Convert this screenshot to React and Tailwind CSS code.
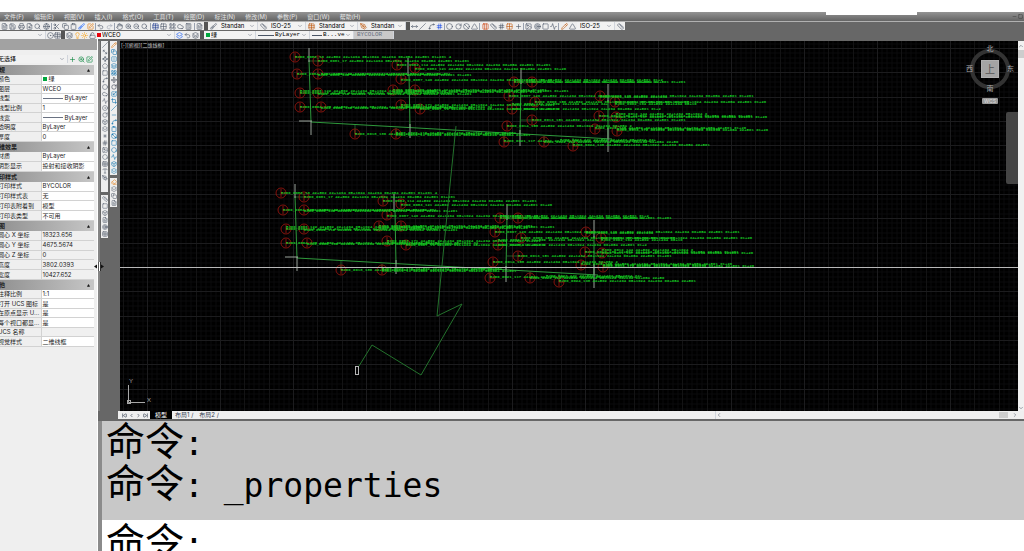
import React, { useState } from 'react';
import {
  ChevronDown, ChevronUp, ChevronLeft, ChevronRight, SkipBack, SkipForward, Save, Printer, FileSearch, Search, Globe,
  Scissors, Copy, Clipboard, Brush, SquarePen, Undo2, Redo2, Hand, ZoomIn, ZoomOut, Move, Table, Grid2x2, LayoutGrid,
  Calculator, Layers, Layers2, Lightbulb, Sun, LockOpen, FileText, Slash, Spline, Circle, Pentagon, Square, Hexagon,
  Type, Eraser, FlipHorizontal, RotateCw, Scaling, Minus, Crop, Image, Pencil, Ruler, MoveHorizontal, MoveDiagonal2,
  Target, Triangle, Activity, Columns3, Ban, Diameter, Asterisk, Cloud, Box, Waypoints, PenTool, CircleDot, Plus, Hash,
} from 'lucide-react';

const menus = ['文件(F)', '编辑(E)', '视图(V)', '插入(I)', '格式(O)', '工具(T)', '绘图(D)', '标注(N)', '修改(M)', '参数(P)', '窗口(W)', '帮助(H)'];

const fileTools = [
  [FileText, '新建'], [Save, '保存'], [Printer, '打印'], [FileSearch, '预览'], [Search, '发布'], [Globe, '三维打印'], null,
  [Scissors, '剪切'], [Copy, '复制'], [Clipboard, '粘贴'], [Brush, '特性匹配', 'text-blue-600'], [SquarePen, '块编辑', 'text-amber-600'], null,
  [Undo2, '放弃'], [Redo2, '重做', 'text-gray-400'], null,
  [Hand, '平移'], [ZoomIn, '实时缩放'], [ZoomOut, '窗口缩放'], [Search, '上一个'], null,
  [Table, '特性', 'text-blue-900'], [Grid2x2, '设计中心'], [LayoutGrid, '工具选项板'], [Cloud, '图纸集'], [Calculator, '计算器'], null,
  [FileText, '帮助'],
];

const dimTools = [
  [MoveHorizontal, '线性'], [Slash, '对齐'], [Spline, '弧长'], [Hash, '坐标', 'text-blue-700'], null,
  [Circle, '半径'], [RotateCw, '折弯'], [Ban, '直径'], [Triangle, '角度'], null,
  [Columns3, '快速标注', 'text-orange-700'], [Ruler, '基线'], [Hash, '连续'], [Grid2x2, '等距标注', 'text-amber-700'], [Plus, '打断标注'], null,
  [Image, '公差'], [Target, '圆心标记'], [Square, '检验'], [Activity, '折弯线性'], null,
  [Pencil, '编辑标注', 'text-amber-700'], [Triangle, '编辑文字'],
];

const drawTools = [
  [Slash, '直线'], [MoveDiagonal2, '构造线'], [Waypoints, '多段线'], [Pentagon, '多边形'], [Square, '矩形'], [Spline, '圆弧'],
  [Circle, '圆'], [Cloud, '修订云线'], [Activity, '样条曲线'], [CircleDot, '椭圆'], [RotateCw, '椭圆弧'], [Box, '插入块'], [Layers2, '创建块'],
  [Asterisk, '点'], [Hash, '图案填充'], [Image, '渐变色'], [Hexagon, '面域'], [Table, '表格'], [Type, '多行文字'], [PenTool, '添加选定'],
];
const inquiryTools = [[Ruler, '距离'], [Square, '面积'], [Box, '体积'], [FileText, '列表'], [Target, '定位点'], [Table, '查询']];

const modifyTools = [
  [Pencil, '删除', 'text-amber-600'], [Copy, '复制对象'], [FlipHorizontal, '镜像'], [Layers, '偏移'], [LayoutGrid, '阵列'], [Move, '移动', 'text-gray-800'],
  [RotateCw, '旋转', 'text-gray-800'], [Scaling, '缩放'], [Crop, '拉伸'], [Slash, '修剪'], [Minus, '延伸'], [Spline, '打断于点'],
  [Clipboard, '打断'], [Diameter, '合并'], [Square, '倒角'], [Hexagon, '圆角'], [Activity, '光顺曲线'], [Box, '分解'], [Layers2, '编辑块'],
];
const orderTools = [[Eraser, '前置', 'text-amber-600'], [Layers2, '后置'], [Copy, '置于对象之上'], [FileText, '置于对象之下']];

const groups = [
  {
    title: '常规', size: 'h-[67px]',
    rows: [['颜色', '绿', 'swatch'], ['图层', 'WCEO'], ['线型', 'ByLayer', 'line'], ['线型比例', '1'], ['线宽', 'ByLayer', 'line'], ['透明度', 'ByLayer'], ['厚度', '0']],
  },
  { title: '三维效果', size: 'h-[20px]', rows: [['材质', 'ByLayer'], ['阴影显示', '投射和接收阴影']] },
  { title: '打印样式', size: 'h-[39px]', rows: [['打印样式', 'BYCOLOR'], ['打印样式表', '无'], ['打印表附着到', '模型'], ['打印表类型', '不可用']] },
  {
    title: '视图', size: 'h-[49px]', muted: true,
    rows: [['圆心 X 坐标', '18323.656'], ['圆心 Y 坐标', '4675.5674'], ['圆心 Z 坐标', '0'], ['高度', '3802.0393'], ['宽度', '10427.652']],
  },
  {
    title: '其他', size: 'h-[57px]',
    rows: [['注释比例', '1:1'], ['打开 UCS 图标', '是'], ['在原点显示 U...', '是'], ['每个视口都显...', '是'], ['UCS 名称', ''], ['视觉样式', '二维线框']],
  },
];

// Survey points: marker centre x, y
const points = [
  [295, 57], [318, 61], [297, 74], [318, 74], [300, 93], [318, 93], [300, 107], [321, 107],
  [397, 65], [415, 68], [401, 79], [393, 90], [415, 90], [401, 105], [420, 109], [355, 134], [396, 134],
  [514, 82], [532, 82], [509, 96], [535, 102], [512, 109], [532, 120], [507, 126], [504, 142], [544, 142], [573, 146],
  [600, 96], [615, 102], [599, 116], [616, 117], [595, 129], [617, 131],
];

// Annotations: x, baseline y, character count
const notes = [
  [295, 58, 65], [318, 62, 64], [397, 66, 64], [415, 70, 63],
  [297, 75, 65], [318, 76, 64], [321, 75, 52], [401, 81, 63],
  [514, 81, 62], [532, 83, 64], [514, 83, 60], [393, 91, 65], [415, 92, 64], [393, 93, 62],
  [300, 94, 64], [318, 95, 64], [300, 92, 58], [509, 97, 44], [600, 97, 64], [600, 98, 28],
  [535, 103, 64], [615, 103, 63], [615, 105, 34], [401, 106, 64], [300, 108, 65], [321, 109, 64], [401, 108, 38],
  [420, 110, 58], [512, 110, 62], [512, 105, 40], [599, 117, 64], [616, 118, 63], [616, 115, 38], [532, 121, 64],
  [507, 127, 52], [595, 129, 63], [617, 131, 63], [617, 130, 44],
  [355, 135, 64], [396, 136, 57], [396, 134, 50], [504, 142, 61], [544, 143, 56], [560, 141, 40], [573, 146, 58],
];

const NOTE_TAIL = ' 42+502 22+1494 05+1024 34+294 00+054 22+501 01+261 40+0228 50 11+504 60';

const noteText = (i, length) => `RJ00_00${String(80 + i).slice(-2)}_1${(i * 7) % 90}${NOTE_TAIL}`.slice(0, length);

const Tools = ({ items, vertical, tint = 'text-gray-600' }) => {
  const across = items.length === 1 ? 'h-[8px] w-[10px] shrink-0 justify-center' : 'h-[8px] flex-auto justify-between px-[1px]';
  return (
    <div className={`flex items-center bg-[#eeeeee] ${vertical ? 'w-[7px] flex-col gap-[1px] py-[1px]' : across}`}>
      {items.map((item, i) => {
        if (!item) return <span key={i} className="h-[7px] w-px bg-gray-400" />;
        const [Icon, label, color] = item;
        return (
          <button key={i} type="button" aria-label={label} className={`shrink-0 ${color || tint}`}>
            <Icon size={vertical ? 6 : 7} strokeWidth={2} className="block" />
          </button>
        );
      })}
    </div>
  );
};

const Picker = ({ label, value, width, lead, mono, disabled, indent = 'pl-[3px]' }) => (
  <label className={`flex h-[8px] shrink-0 items-center overflow-hidden border-r border-gray-300 ${width} ${disabled ? 'bg-[#c9c9c9] text-gray-500' : 'bg-[#f2f2f2] text-black'}`}>
    {lead}
    <select
      aria-label={label}
      disabled={disabled}
      className={`h-[8px] min-w-0 flex-1 appearance-none bg-transparent text-[6px] leading-[8px] outline-none ${indent} ${mono ? 'font-["Liberation_Mono",monospace]' : ''}`}
    >
      <option>{value}</option>
    </select>
    {!disabled && <ChevronDown size={6} className="mr-[2px] shrink-0 text-gray-500" />}
  </label>
);

const Grip = () => <span className="h-[8px] w-[4px] shrink-0 bg-[#555555]" />;

const PropertyGroup = ({ group }) => {
  const [open, setOpen] = useState(true);
  return (
    <section>
      <button
        type="button"
        onClick={() => setOpen(!open)}
        className="flex h-[10px] w-full items-center justify-between bg-linear-to-r from-[#919191] to-[#c6c6c6] pr-[4px] text-[6px] leading-[10px] font-bold"
      >
        <span className="-ml-[5px]">{group.title}</span>
        <Triangle size={3} fill="currentColor" />
      </button>
      {open && (
        <table className={`w-full table-fixed border-collapse text-[6px] leading-[8px] ${group.size}`}>
          <tbody>
            {group.rows.map(([name, value, mark]) => (
              <tr key={name} className="border-b border-[#d2d2d2]">
                <th scope="row" className="w-[43px] overflow-hidden border-r border-[#d2d2d2] p-0 text-left font-normal whitespace-nowrap">{name}</th>
                <td className={`overflow-hidden p-0 pl-[1px] whitespace-nowrap ${group.muted || !value ? 'bg-[#f0f0f0]' : 'bg-white'}`}>
                  {mark === 'swatch' && <span className="mr-[2px] inline-block size-[4px] bg-green-600" />}
                  {mark === 'line' && <span className="mr-[2px] inline-block h-px w-[20px] bg-gray-500 align-middle" />}
                  {value}
                </td>
              </tr>
            ))}
          </tbody>
        </table>
      )}
    </section>
  );
};

const Survey = () => (
  <g>
    <g stroke="#2f9a3c" strokeWidth="1" fill="none">
      <path d="M309 60L311 122M409 74L410 128M521 80L520 134M608 100V138M311 122L612 139" />
      <path d="M355 125V134M396 128V134M504 134V142M544 136V142M573 138V146M309 61H318M409 90H415M521 82H532M521 120H532M608 117H616" strokeWidth="0.6" />
    </g>
    <g stroke="#9aa39a" strokeWidth="1" fill="none">
      <path d="M309 48V62M311 121V135M408 58V76M410 124V138M521 68V84M520 130V146M608 84V102M608 128V152M299 121H312" />
    </g>
    <g stroke="#a5160f" strokeWidth="0.8" fill="none">
      {points.map(([x, y]) => (
        <path key={`${x}-${y}`} d={`M${x - 5} ${y}a5 5 0 1 0 10 0a5 5 0 1 0 -10 0M${x} ${y - 4}v8M${x} ${y}h5`} />
      ))}
    </g>
    <g fill="#14c420" fontSize="4" fontWeight="bold" fontFamily="Liberation Mono, monospace">
      {notes.map(([x, y, length], i) => (
        <text key={i} x={x} y={y}>{noteText(i, length)}</text>
      ))}
    </g>
  </g>
);

const Drawing = () => (
  <svg viewBox="120 41 898 370" preserveAspectRatio="xMinYMin slice" className="block h-full w-full">
    <defs>
      <pattern id="grid" x="147" y="48" width="73" height="73" patternUnits="userSpaceOnUse">
        <path d="M5 0V73M10 0V73M15 0V73M20 0V73M29 0V73M34 0V73M39 0V73M44 0V73M54 0V73M59 0V73M64 0V73M69 0V73" stroke="#0a0a0b" />
        <path d="M0 5H73M0 10H73M0 15H73M0 20H73M0 29H73M0 34H73M0 39H73M0 44H73M0 54H73M0 59H73M0 64H73M0 69H73" stroke="#0a0a0b" />
        <path d="M24.5 0V73M49.5 0V73" stroke="#131314" />
        <path d="M0.5 0V73M0 0.5H73M0 24.5H73M0 49.5H73" stroke="#1c1c1e" />
      </pattern>
    </defs>
    <rect x="120" y="41" width="898" height="370" fill="url(#grid)" />
    <Survey />
    <g transform="translate(-14 136)"><Survey /></g>
    <path d="M456 126L451 175L437 316L462 304L421 375L372 345L359 366" fill="none" stroke="#23722c" strokeWidth="1" />
    <rect x="355.5" y="366.5" width="3" height="8" fill="none" stroke="#b5b5b5" />
    <path d="M120 267.5H1018" stroke="#b8b8b8" />
    <g stroke="#a8a8a8" fill="none">
      <path d="M128.5 385V402.5H145" />
      <rect x="127.5" y="400.5" width="3" height="3" />
    </g>
    <g fill="#a8a8a8" fontSize="6" fontFamily="Liberation Sans, sans-serif">
      <text x="129" y="383">Y</text>
      <text x="147" y="402">X</text>
    </g>
  </svg>
);

const ViewCube = () => (
  <div className="absolute top-[4px] right-[4px] flex w-[48px] flex-col items-center text-[7px] leading-[8px] text-[#aaaaaa]">
    <div className="relative flex h-[48px] w-full items-center justify-between">
      <span className="absolute inset-x-[4px] top-[4px] h-[40px] rounded-full border-4 border-[#333333]" />
      <span className="absolute inset-x-0 top-0 text-center">北</span>
      <span className="relative">西</span>
      <button type="button" className="relative size-[18px] border border-[#b0b0b0] bg-[#a4a4a4] text-[10px] leading-[16px] text-[#555555]">上</button>
      <span className="relative">东</span>
      <span className="absolute inset-x-0 bottom-0 text-center">南</span>
    </div>
    <button type="button" className="mt-[5px] h-[6px] w-[16px] rounded-[1px] bg-[#999999] text-[5px] leading-[6px] text-[#dddddd]">WCS</button>
  </div>
);

const App = () => {
  const [command, setCommand] = useState('');
  const [tab, setTab] = useState('模型');

  return (
    <div className='flex h-screen w-full flex-col overflow-hidden bg-[#676767] font-["Inter","Noto_Sans_CJK_SC",sans-serif] text-[6px] text-[#1c1c1c]'>
      <div className="h-3 shrink-0 bg-white" />

      {/* Menu bar */}
      <header className="flex h-[10px] shrink-0 items-start justify-between border-b border-[#b0b0b0] bg-linear-to-b from-[#939393] to-[#646464]">
        <nav className="flex gap-[10px] pl-[4px]">
          {menus.map((menu) => (
            <button key={menu} type="button" className="leading-[9px] whitespace-nowrap text-[#e4e4e4]">{menu}</button>
          ))}
        </nav>
        <div className="flex w-[205px] items-start justify-between">
          <span className="ml-[7px] h-[3px] w-[91px] bg-white" />
          <span className="flex gap-[1px] pt-[2px] pr-[1px] text-[#303030]">
            <Minus size={5} />
            <Square size={5} />
          </span>
        </div>
      </header>

      {/* Standard, styles and dimension toolbars */}
      <div className="flex h-[8px] shrink-0">
        <div className="flex w-[204px] shrink-0 overflow-hidden"><Tools items={fileTools} /></div>
        <Grip />
        <div className="flex shrink-0">
          <Tools items={[[Brush, '文字样式']]} />
          <Picker label="文字样式" value="Standan" width="w-[40px]" />
          <Tools items={[[Ruler, '标注样式']]} />
          <Picker label="标注样式" value="ISO-25" width="w-[38px]" />
          <Tools items={[[Table, '表格样式', 'text-amber-700']]} />
          <Picker label="表格样式" value="Standard" width="w-[42px]" />
          <Tools items={[[PenTool, '多重引线样式', 'text-amber-700']]} />
          <Picker label="多重引线样式" value="Standan" width="w-[38px]" />
        </div>
        <Grip />
        <div className="flex w-[215px] shrink-0">
          <Tools items={dimTools} />
          <Picker label="当前标注样式" value="ISO-25" width="w-[38px]" />
          <Tools items={[[Ruler, '样式管理']]} />
        </div>
      </div>

      {/* Workspace, layer and property toolbars */}
      <div className="mt-[1px] flex h-[8px] shrink-0">
        <Picker label="工作空间" value="" width="w-[46px]" />
        <div className="flex w-[15px] shrink-0"><Tools items={[[CircleDot, '工作空间设置'], [Table, '我的工作空间']]} /></div>
        <Grip />
        <div className="flex w-[32px] shrink-0">
          <Tools items={[[Layers, '图层特性'], [Lightbulb, '开关', 'text-amber-500'], [Sun, '冻结', 'text-amber-500'], [LockOpen, '锁定']]} />
        </div>
        <Picker label="图层" value="WCEO" width="w-[78px]" indent="pl-[1px]" lead={<span className="size-[4px] bg-red-600" />} />
        <div className="flex w-[25px] shrink-0">
          <Tools items={[[Layers2, '置为当前', 'text-blue-600'], [Undo2, '上一个图层'], [Layers, '图层状态']]} />
        </div>
        <Grip />
        <Picker label="颜色" value="绿" width="w-[52px]" indent="pl-[1px]" lead={<span className="ml-[2px] size-[4px] bg-green-600" />} />
        <Picker label="线型" value="ByLayer" width="w-[54px]" indent="pl-[1px]" mono lead={<span className="ml-[2px] h-px w-[16px] bg-gray-600" />} />
        <Picker label="线宽" value="B...ve" width="w-[44px]" indent="pl-[1px]" mono lead={<span className="ml-[2px] h-px w-[10px] bg-gray-600" />} />
        <Picker label="打印样式" value="BYCOLOR" width="w-[40px]" mono disabled />
      </div>

      <div className="flex min-h-0 flex-1">
        {/* Properties palette */}
        <aside className="w-[98px] shrink-0 overflow-hidden border-r border-white bg-[#efefef]">
          <div className="h-[11px] bg-[#a2a2a2]" />
          <div className="-ml-[2px] pr-[3px]">
            <div className="flex h-[15px] items-center pt-[3px]">
              <Picker label="选择" value="无选择" width="w-[70px]" indent="pl-0" />
              <Tools items={[[Plus, '切换选择', 'text-green-700'], [ZoomIn, '选择对象', 'text-green-700'], [SquarePen, '快速选择', 'text-green-700']]} />
            </div>
            {groups.map((group) => <PropertyGroup key={group.title} group={group} />)}
          </div>
        </aside>

        <div className="flex min-w-0 flex-1 flex-col">
          <div className="flex min-h-0 flex-1 pt-[2px]">
            <div className="relative flex w-[22px] shrink-0 items-start gap-[2px] border-l-2 border-[#858585] pl-[1px]">
              <div className="flex flex-col gap-[3px]">
                <div className="h-[151px] overflow-hidden bg-[#eeeeee]"><Tools items={drawTools} vertical /></div>
                <Tools items={inquiryTools} vertical />
              </div>
              <div className="flex flex-col gap-[3px]">
                <Tools items={modifyTools} vertical tint="text-sky-700" />
                <Tools items={orderTools} vertical />
              </div>
              {/* Resize cursor over the palette edge */}
              <svg viewBox="0 0 10 9" className="absolute top-[221px] -left-[6px] h-[9px] w-[10px]" aria-hidden="true">
                <path d="M4 0h2v9h-2z" fill="#fff" />
                <path d="M0 4.5L3 2.5V6.5zM10 4.5L7 2.5V6.5zM4 0h.7v9H4zM6 0h.7v9H6z" fill="#111" />
              </svg>
            </div>

            <main className="relative min-w-0 flex-1 bg-black">
              <Drawing />
              <p className="absolute top-[1px] left-[1px] text-[5px] leading-[7px] text-[#c9c9c9]">[-][俯视][二维线框]</p>
              <ViewCube />
              <div className="absolute top-[71px] right-0 h-[72px] w-[12px] rounded-l-[2px] bg-[#444444]" />
            </main>

            <div className="flex w-[6px] shrink-0 flex-col items-center justify-between bg-[#f1f1f1] text-gray-600">
              <div className="flex w-full flex-col items-center pt-[2px]">
                <ChevronUp size={6} />
                <span className="mt-[1px] h-[8px] w-full bg-[#cdcdcd]" />
              </div>
              <ChevronDown size={6} />
            </div>
          </div>

          {/* Layout tabs and horizontal scroll bar */}
          <div className="ml-[20px] flex h-[8px] shrink-0 justify-between bg-[#efefef] pl-[4px]">
            <div className="flex items-center">
              {[[SkipBack, '第一个'], [ChevronLeft, '前一个'], [ChevronRight, '后一个'], [SkipForward, '最后一个']].map(([Icon, label]) => (
                <button key={label} type="button" aria-label={label} className="w-[7px] text-gray-700"><Icon size={5} strokeWidth={3} /></button>
              ))}
              {['模型', '布局1', '布局2'].map((name) => (
                <button
                  key={name}
                  type="button"
                  onClick={() => setTab(name)}
                  className={`h-[8px] leading-[8px] ${tab === name ? 'bg-black px-[5px] text-white' : 'px-[3px] text-gray-700'}`}
                >
                  {name}{tab === name ? '' : ' /'}
                </button>
              ))}
            </div>
            <div className="flex w-[309px] items-center justify-between border-l border-gray-300 text-gray-600">
              <ChevronLeft size={6} />
              <span className="mr-[4px] ml-auto h-[6px] w-[9px] bg-[#cdcdcd]" />
              <ChevronRight size={6} className="mr-[6px]" />
            </div>
          </div>

          {/* Command window */}
          <section className='mt-[2px] h-[130px] shrink-0 overflow-hidden border-l-4 border-[#8b8b8b] bg-white font-["DejaVu_Sans_Mono","Noto_Sans_CJK_SC",monospace] text-[33px] leading-[42px] text-black'>
            <div className="h-[99px] bg-[#c8c8c8] pl-[4px]">
              <p className="h-[42px]"><span className="text-[39px]">命令</span>:</p>
              <p className="h-[42px] whitespace-pre"><span className="text-[39px]">命令</span>: _properties</p>
            </div>
            <label className="flex pt-[2px] pl-[4px]">
              <span className="whitespace-nowrap"><span className="text-[39px]">命令</span>:</span>
              <input value={command} onChange={(e) => setCommand(e.target.value)} className="min-w-0 flex-1 pl-5 outline-none" />
            </label>
          </section>
        </div>
      </div>
    </div>
  );
};

export default App;
